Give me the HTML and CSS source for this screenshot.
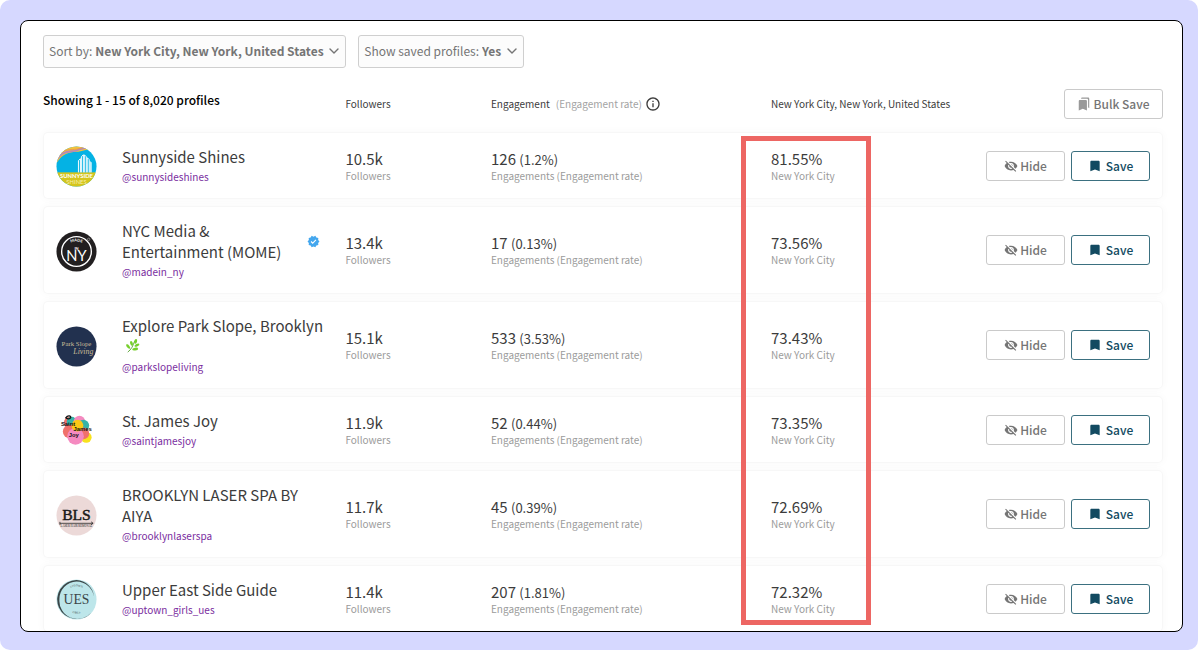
FILE: index.html
```html
<!DOCTYPE html>
<html lang="en">
<head>
  <meta charset="UTF-8" />
  <meta name="viewport" content="width=device-width, initial-scale=1" />
  <title>Profiles</title>
  <link rel="stylesheet" href="styles.css">
</head>
<body>
  <!-- shared icons -->
  <svg width="0" height="0" class="sprite" aria-hidden="true">
    <symbol id="chevron" viewBox="0 0 12 12"><path d="M2 4l4 4 4-4" fill="none" stroke="currentColor" stroke-width="1.4" stroke-linecap="round" stroke-linejoin="round"/></symbol>
    <symbol id="hide" viewBox="0 0 24 24"><path fill="currentColor" d="M12 7c2.76 0 5 2.24 5 5 0 .65-.13 1.26-.36 1.83l2.92 2.92c1.51-1.26 2.7-2.89 3.43-4.75-1.73-4.39-6-7.5-11-7.5-1.4 0-2.74.25-3.98.7l2.16 2.16C10.74 7.13 11.35 7 12 7zM2 4.27l2.28 2.28.46.46C3.08 8.3 1.78 10.02 1 12c1.73 4.39 6 7.5 11 7.5 1.55 0 3.03-.3 4.38-.84l.42.42L19.73 22 21 20.73 3.27 3 2 4.27zM7.53 9.8l1.55 1.55c-.05.21-.08.43-.08.65 0 1.66 1.34 3 3 3 .22 0 .44-.03.65-.08l1.55 1.55c-.67.33-1.41.53-2.2.53-2.76 0-5-2.24-5-5 0-.79.2-1.53.53-2.2zm4.31-.78l3.15 3.15.02-.16c0-1.66-1.34-3-3-3l-.17.01z"/></symbol>
    <symbol id="save" viewBox="0 0 24 24"><path fill="currentColor" d="M18 3H6c-1.100 0-2 .9-2 2v16l8-3 8 3V5c0-1.100-.9-2-2-2z"/></symbol>
    <symbol id="bulk" viewBox="0 0 24 24"><path fill="currentColor" d="M19 18l2 1V3c0-1.100-.9-2-2-2H8.990C7.890 1 7 1.900 7 3h10c1.100 0 2 .9 2 2v13zM15 5H5c-1.100 0-2 .9-2 2v16l7-3 7 3V7c0-1.100-.9-2-2-2z"/></symbol>
  </svg>

  <div class="page">
    <main class="panel">
      <form class="filters">
        <div class="filter">
          <label for="sort">Sort by:</label>
          <select id="sort"><option>New York City, New York, United States</option></select>
          <svg class="chevron"><use href="#chevron"/></svg>
        </div>
        <div class="filter">
          <label for="saved">Show saved profiles:</label>
          <select id="saved"><option>Yes</option><option>No</option></select>
          <svg class="chevron"><use href="#chevron"/></svg>
        </div>
      </form>

      <div class="results">
        <table class="profiles">
          <thead>
            <tr>
              <th class="col-profile count">Showing 1 - 15 of 8,020 profiles</th>
              <th class="col-followers">Followers</th>
              <th class="col-engagement">
                <div class="engagement-head">
                  Engagement <span class="muted">(Engagement rate)</span>
                  <svg class="info" viewBox="0 0 24 24"><path fill="currentColor" d="M11 7h2v2h-2zm0 4h2v6h-2zm1-9C6.480 2 2 6.480 2 12s4.480 10 10 10 10-4.480 10-10S17.520 2 12 2zm0 18c-4.410 0-8-3.590-8-8s3.590-8 8-8 8 3.590 8 8-3.590 8-8 8z"/></svg>
                </div>
              </th>
              <th colspan="2">
                <div class="city-head">
                  New York City, New York, United States
                  <button type="button" class="btn bulk"><svg class="icon"><use href="#bulk"/></svg>Bulk Save</button>
                </div>
              </th>
            </tr>
          </thead>
          <tbody>
            <tr>
              <td>
                <div class="profile">
                  <svg class="avatar" viewBox="0 0 42 42">
                    <clipPath id="round"><circle cx="21" cy="21" r="20.500"/></clipPath>
                    <g clip-path="url(#round)">
                      <rect width="42" height="42" fill="#04b2e4"/>
                      <path d="M0 0h42v3c-10-1-13 3-22 3C9 7 5 11 1 17z" fill="#f3c23c"/>
                      <path d="M0 15C6 5 12 6 19 5c5-1 7-3 12-3" fill="none" stroke="#b58ab8" stroke-width="2"/>
                      <path d="M0 12C6 3 13 4 19 3.500c4 0 7-2 10-2" fill="none" stroke="#e79a4f" stroke-width="1"/>
                      <rect y="27" width="42" height="15" fill="#d5c51c"/>
                      <path d="M23 27V15l2-2v14M26 27V11l2-2v18M29 27V9l2 2v16M32 27V12l2 2v13M35 27V16l1 1v10" fill="none" stroke="#fff" stroke-width="1"/>
                      <text x="21" y="33" class="logo-sunny">SUNNYSIDE</text>
                      <text x="21" y="38.500" class="logo-sunny thin">SHINES</text>
                    </g>
                  </svg>
                  <div class="who">
                    <div class="name">Sunnyside Shines</div>
                    <a href="#sunnysideshines">@sunnysideshines</a>
                  </div>
                </div>
              </td>
              <td><div class="value">10.5k</div><div class="hint">Followers</div></td>
              <td><div class="value">126 <small>(1.2%)</small></div><div class="hint">Engagements (Engagement rate)</div></td>
              <td><div class="value">81.55%</div><div class="hint">New York City</div></td>
              <td>
                <div class="actions">
                  <button type="button" class="btn"><svg class="icon"><use href="#hide"/></svg>Hide</button>
                  <button type="button" class="btn save"><svg class="icon"><use href="#save"/></svg>Save</button>
                </div>
              </td>
            </tr>
            <tr>
              <td>
                <div class="profile">
                  <svg class="avatar" viewBox="0 0 42 42">
                    <circle cx="21" cy="21" r="20.500" fill="#221f20"/>
                    <circle cx="21" cy="21" r="15.200" fill="none" stroke="#fff" stroke-width="1.400"/>
                    <circle cx="33.500" cy="8.500" r="1.200" fill="none" stroke="#bbb" stroke-width=".6"/>
                    <path id="made-arc" d="M12 14a14 14 0 0 1 18 0" fill="none"/>
                    <text class="logo-made"><textPath href="#made-arc" startOffset="50%">MADE</textPath></text>
                    <text x="21" y="19" class="logo-made">IN</text>
                    <text x="21" y="31" class="logo-ny">NY</text>
                  </svg>
                  <div class="who">
                    <div class="name">NYC Media &amp; Entertainment (MOME)</div>
                    <a href="#madein_ny">@madein_ny</a>
                  </div>
                  <svg class="verified" viewBox="0 0 24 24"><path fill="#44a7ee" d="M23 12l-2.440-2.780.34-3.680-3.610-.82-1.890-3.180L12 3 8.600 1.540 6.710 4.720l-3.610.81.34 3.680L1 12l2.440 2.780-.34 3.690 3.610.82 1.890 3.180L12 21l3.400 1.460 1.890-3.180 3.610-.82-.34-3.680z"/><path d="M7.500 12l3 3 6-6" fill="none" stroke="#fff" stroke-width="2"/></svg>
                </div>
              </td>
              <td><div class="value">13.4k</div><div class="hint">Followers</div></td>
              <td><div class="value">17 <small>(0.13%)</small></div><div class="hint">Engagements (Engagement rate)</div></td>
              <td><div class="value">73.56%</div><div class="hint">New York City</div></td>
              <td>
                <div class="actions">
                  <button type="button" class="btn"><svg class="icon"><use href="#hide"/></svg>Hide</button>
                  <button type="button" class="btn save"><svg class="icon"><use href="#save"/></svg>Save</button>
                </div>
              </td>
            </tr>
            <tr>
              <td>
                <div class="profile">
                  <svg class="avatar" viewBox="0 0 42 42">
                    <circle cx="21" cy="21" r="20.500" fill="#22314f"/>
                    <text x="21" y="20.500" class="logo-park">Park Slope</text>
                    <text x="28" y="28.500" class="logo-park script">Living</text>
                  </svg>
                  <div class="who">
                    <div class="name">Explore Park Slope, Brooklyn
                      <svg class="leaf" viewBox="0 0 16 16"><path d="M2 15C6 12 8 8 10 2" fill="none" stroke="#4f9e2a" stroke-width="1"/><g fill="#77cf2c"><ellipse cx="11" cy="2.800" rx="1.600" ry="2.800" transform="rotate(15 11 3)"/><ellipse cx="6.300" cy="5" rx="1.500" ry="2.800" transform="rotate(-18 6.300 5)"/><ellipse cx="2.500" cy="8.500" rx="1.500" ry="3" transform="rotate(-38 2.500 8.500)"/><ellipse cx="12.500" cy="7" rx="1.500" ry="3" transform="rotate(65 12.500 7)"/><ellipse cx="10.500" cy="11.500" rx="1.600" ry="3.400" transform="rotate(82 10.500 11.500)"/></g></svg>
                    </div>
                    <a href="#parkslopeliving">@parkslopeliving</a>
                  </div>
                </div>
              </td>
              <td><div class="value">15.1k</div><div class="hint">Followers</div></td>
              <td><div class="value">533 <small>(3.53%)</small></div><div class="hint">Engagements (Engagement rate)</div></td>
              <td><div class="value">73.43%</div><div class="hint">New York City</div></td>
              <td>
                <div class="actions">
                  <button type="button" class="btn"><svg class="icon"><use href="#hide"/></svg>Hide</button>
                  <button type="button" class="btn save"><svg class="icon"><use href="#save"/></svg>Save</button>
                </div>
              </td>
            </tr>
            <tr>
              <td>
                <div class="profile">
                  <svg class="avatar" viewBox="0 0 42 42">
                    <circle cx="14" cy="13" r="6" fill="#f0716b"/>
                    <circle cx="16" cy="12" r="5" fill="#35b3a8"/>
                    <circle cx="24" cy="12" r="6" fill="#f58ac0"/>
                    <circle cx="28" cy="16" r="6" fill="#35b3a8"/>
                    <circle cx="14" cy="22" r="7" fill="#f0716b"/>
                    <circle cx="31" cy="28" r="5.500" fill="#f8e21e"/>
                    <circle cx="28" cy="24" r="6" fill="#f0716b"/>
                    <circle cx="20" cy="27" r="8.500" fill="#f58ac0"/>
                    <circle cx="22" cy="16" r="6" fill="#fbc916"/>
                    <path d="M10 8c2-3 6-2 5 0s-4 1-5 0z" fill="none" stroke="#111" stroke-width="1.300"/>
                    <text x="5" y="16.500" class="logo-joy">Saint</text>
                    <text x="18" y="22" class="logo-joy">James</text>
                    <text x="13" y="28" class="logo-joy">Joy</text>
                  </svg>
                  <div class="who">
                    <div class="name">St. James Joy</div>
                    <a href="#saintjamesjoy">@saintjamesjoy</a>
                  </div>
                </div>
              </td>
              <td><div class="value">11.9k</div><div class="hint">Followers</div></td>
              <td><div class="value">52 <small>(0.44%)</small></div><div class="hint">Engagements (Engagement rate)</div></td>
              <td><div class="value">73.35%</div><div class="hint">New York City</div></td>
              <td>
                <div class="actions">
                  <button type="button" class="btn"><svg class="icon"><use href="#hide"/></svg>Hide</button>
                  <button type="button" class="btn save"><svg class="icon"><use href="#save"/></svg>Save</button>
                </div>
              </td>
            </tr>
            <tr>
              <td>
                <div class="profile">
                  <svg class="avatar" viewBox="0 0 42 42">
                    <circle cx="21" cy="21" r="20.500" fill="#ecd9d8"/>
                    <text x="21" y="26" class="logo-bls">BLS</text>
                    <path d="M4 29h34M4 27.500v3M36 27.500l2 1.500-2 1.500" fill="none" stroke="#222" stroke-width=".8"/>
                    <text x="21" y="33" class="logo-bls tiny">LASER HAIR REMOVAL</text>
                  </svg>
                  <div class="who">
                    <div class="name">BROOKLYN LASER SPA BY AIYA</div>
                    <a href="#brooklynlaserspa">@brooklynlaserspa</a>
                  </div>
                </div>
              </td>
              <td><div class="value">11.7k</div><div class="hint">Followers</div></td>
              <td><div class="value">45 <small>(0.39%)</small></div><div class="hint">Engagements (Engagement rate)</div></td>
              <td><div class="value">72.69%</div><div class="hint">New York City</div></td>
              <td>
                <div class="actions">
                  <button type="button" class="btn"><svg class="icon"><use href="#hide"/></svg>Hide</button>
                  <button type="button" class="btn save"><svg class="icon"><use href="#save"/></svg>Save</button>
                </div>
              </td>
            </tr>
            <tr>
              <td>
                <div class="profile">
                  <svg class="avatar" viewBox="0 0 42 42">
                    <circle cx="21" cy="21" r="20.500" fill="#bde6ea"/>
                    <path d="M21 1A20 20 0 1 0 36 34.500 18.500 18.500 0 0 1 3.500 21 18 18 0 0 1 21 2.500a18.500 18.500 0 0 1 18 16A19 19 0 0 0 21 1z" fill="#3a4547"/>
                    <path id="uptown-arc" d="M9 15a13.500 13.500 0 0 1 24 0" fill="none"/>
                    <path id="girls-arc" d="M8 28a15 15 0 0 0 26 0" fill="none"/>
                    <text class="logo-ues tiny"><textPath href="#uptown-arc" startOffset="50%">UPTOWN</textPath></text>
                    <text x="21" y="25.500" class="logo-ues">UES</text>
                    <text class="logo-ues tiny"><textPath href="#girls-arc" startOffset="50%">GIRLS</textPath></text>
                  </svg>
                  <div class="who">
                    <div class="name">Upper East Side Guide</div>
                    <a href="#uptown_girls_ues">@uptown_girls_ues</a>
                  </div>
                </div>
              </td>
              <td><div class="value">11.4k</div><div class="hint">Followers</div></td>
              <td><div class="value">207 <small>(1.81%)</small></div><div class="hint">Engagements (Engagement rate)</div></td>
              <td><div class="value">72.32%</div><div class="hint">New York City</div></td>
              <td>
                <div class="actions">
                  <button type="button" class="btn"><svg class="icon"><use href="#hide"/></svg>Hide</button>
                  <button type="button" class="btn save"><svg class="icon"><use href="#save"/></svg>Save</button>
                </div>
              </td>
            </tr>
          </tbody>
        </table>
        <div class="highlight"></div>
      </div>
    </main>
  </div>
</body>
</html>
```
FILE: styles.css
```css
* {
  box-sizing: border-box;
}
body {
  margin: 0;
  background: #fff;
  color: #3c3c3c;
  font-family: "Noto Sans CJK SC", "Open Sans", sans-serif;
  font-size: 10px;
  line-height: 16px;
}
.sprite {
  position: absolute;
}
.page {
  display: flex;
  height: 100vh;
  padding: 20px 15px 18px 20px;
  background: #d6d8ff;
  border-radius: 10px;
}
.panel {
  flex: 1;
  min-width: 0;
  padding: 14px 19px 0 22px;
  overflow: hidden;
  background: #fff;
  border: 1px solid #000;
  border-radius: 8px;
}

/* filters */
.filters {
  display: flex;
  gap: 12px;
  margin-bottom: 8px;
}
.filter {
  display: flex;
  align-items: center;
  height: 33px;
  padding: 0 5px 2px 5px;
  color: #757575;
  font-size: 12px;
  background: #fcfcfc;
  border: 1px solid #cfcfcf;
  border-radius: 3px;
}
.filter select {
  margin: 0 4px 0 3px;
  padding: 0;
  color: inherit;
  font: inherit;
  font-weight: bold;
  background: none;
  border: none;
  appearance: none;
}
.chevron {
  width: 12px;
  height: 12px;
}

/* profile table */
.results {
  position: relative;
}
.profiles {
  width: 100%;
  table-layout: fixed;
  border-collapse: separate;
  border-spacing: 0 7px;
}
.profiles th {
  height: 42px;
  padding: 0;
  font-weight: normal;
  text-align: left;
}
.profiles .count {
  padding-bottom: 8px;
  color: #000;
  font-size: 12px;
  font-weight: 500;
}
.col-profile {
  width: 27%;
}
.col-followers {
  width: 13%;
}
.col-engagement {
  width: 25%;
}
.engagement-head,
.city-head {
  display: flex;
  align-items: center;
}
.city-head {
  justify-content: space-between;
}
.muted {
  margin: 0 3px 0 6px;
  color: #a3a3a3;
}
.info {
  width: 16px;
  height: 16px;
}
.profiles tbody tr {
  border-radius: 5px;
  box-shadow: 0 0 8px rgba(0, 0, 0, 0.03);
}
.profiles td {
  padding: 0;
  background: #fff;
  border: solid #f7f7f7;
  border-width: 1px 0;
}
.profiles td:first-child {
  border-left-width: 1px;
  border-radius: 5px 0 0 5px;
}
.profiles td:last-child {
  border-right-width: 1px;
  border-radius: 0 5px 5px 0;
}
.profile {
  display: flex;
  align-items: center;
  padding: 13px 0 11px 12px;
}
.avatar {
  flex: none;
  width: 41px;
  height: 41px;
  margin-right: 25px;
}
.who {
  flex: 1;
  max-width: 206px;
}
.name {
  font-size: 15px;
  line-height: 21px;
}
.who a {
  display: block;
  color: #7a2da0;
  line-height: 20px;
  text-decoration: none;
}
.leaf {
  display: block;
  width: 14px;
  height: 16px;
  margin: 2px 4px 3px;
}
.verified {
  flex: none;
  width: 13px;
  height: 13px;
  margin: 0 25px 20px 0;
}
.value {
  padding-top: 1px;
  font-size: 15px;
  line-height: 18px;
}
.value small {
  font-size: 13px;
  line-height: 1;
}
.hint {
  color: #9b9b9b;
  line-height: 15px;
}

/* buttons */
.actions {
  display: flex;
  justify-content: flex-end;
  gap: 6px;
  padding-right: 12px;
}
.btn {
  display: flex;
  align-items: center;
  justify-content: center;
  gap: 2px;
  width: 79px;
  height: 30px;
  padding: 0;
  color: #757575;
  font: inherit;
  font-size: 12px;
  font-weight: 500;
  background: #fff;
  border: 1px solid #cacaca;
  border-radius: 3px;
}
.bulk {
  width: 99px;
}
.bulk .icon {
  color: #999;
}
.save {
  gap: 4px;
  color: #124a61;
  border-color: #3b7080;
}
.icon {
  width: 14px;
  height: 14px;
}

/* box round the city share column */
.highlight {
  position: absolute;
  top: 60px;
  left: 62.3%;
  width: 130px;
  height: 489px;
  border: 5px solid #ed6663;
  pointer-events: none;
}

/* avatar lettering */
.logo-sunny {
  font: bold 6px "Lato", sans-serif;
  fill: #fff;
  text-anchor: middle;
}
.logo-sunny.thin {
  font-weight: normal;
  fill: #f5efb0;
}
.logo-made {
  font: bold 4px "Lato", sans-serif;
  fill: #fff;
  text-anchor: middle;
}
.logo-ny {
  font: 15px "Lato", sans-serif;
  fill: #fff;
  text-anchor: middle;
}
.logo-park {
  font: 7px "Liberation Serif", serif;
  fill: #cbbd98;
  text-anchor: middle;
}
.logo-park.script {
  font-size: 8px;
  font-style: italic;
}
.logo-joy {
  font: bold 6px "Liberation Sans", sans-serif;
  fill: #111;
}
.logo-bls {
  font: 16px "Liberation Serif", serif;
  fill: #1a1a1a;
  stroke: #1a1a1a;
  stroke-width: 0.5;
  text-anchor: middle;
}
.logo-bls.tiny {
  font-size: 3px;
  stroke: none;
}
.logo-ues {
  font: 14px "Liberation Serif", serif;
  fill: #3a4547;
  text-anchor: middle;
}
.logo-ues.tiny {
  font-size: 3px;
}
```
